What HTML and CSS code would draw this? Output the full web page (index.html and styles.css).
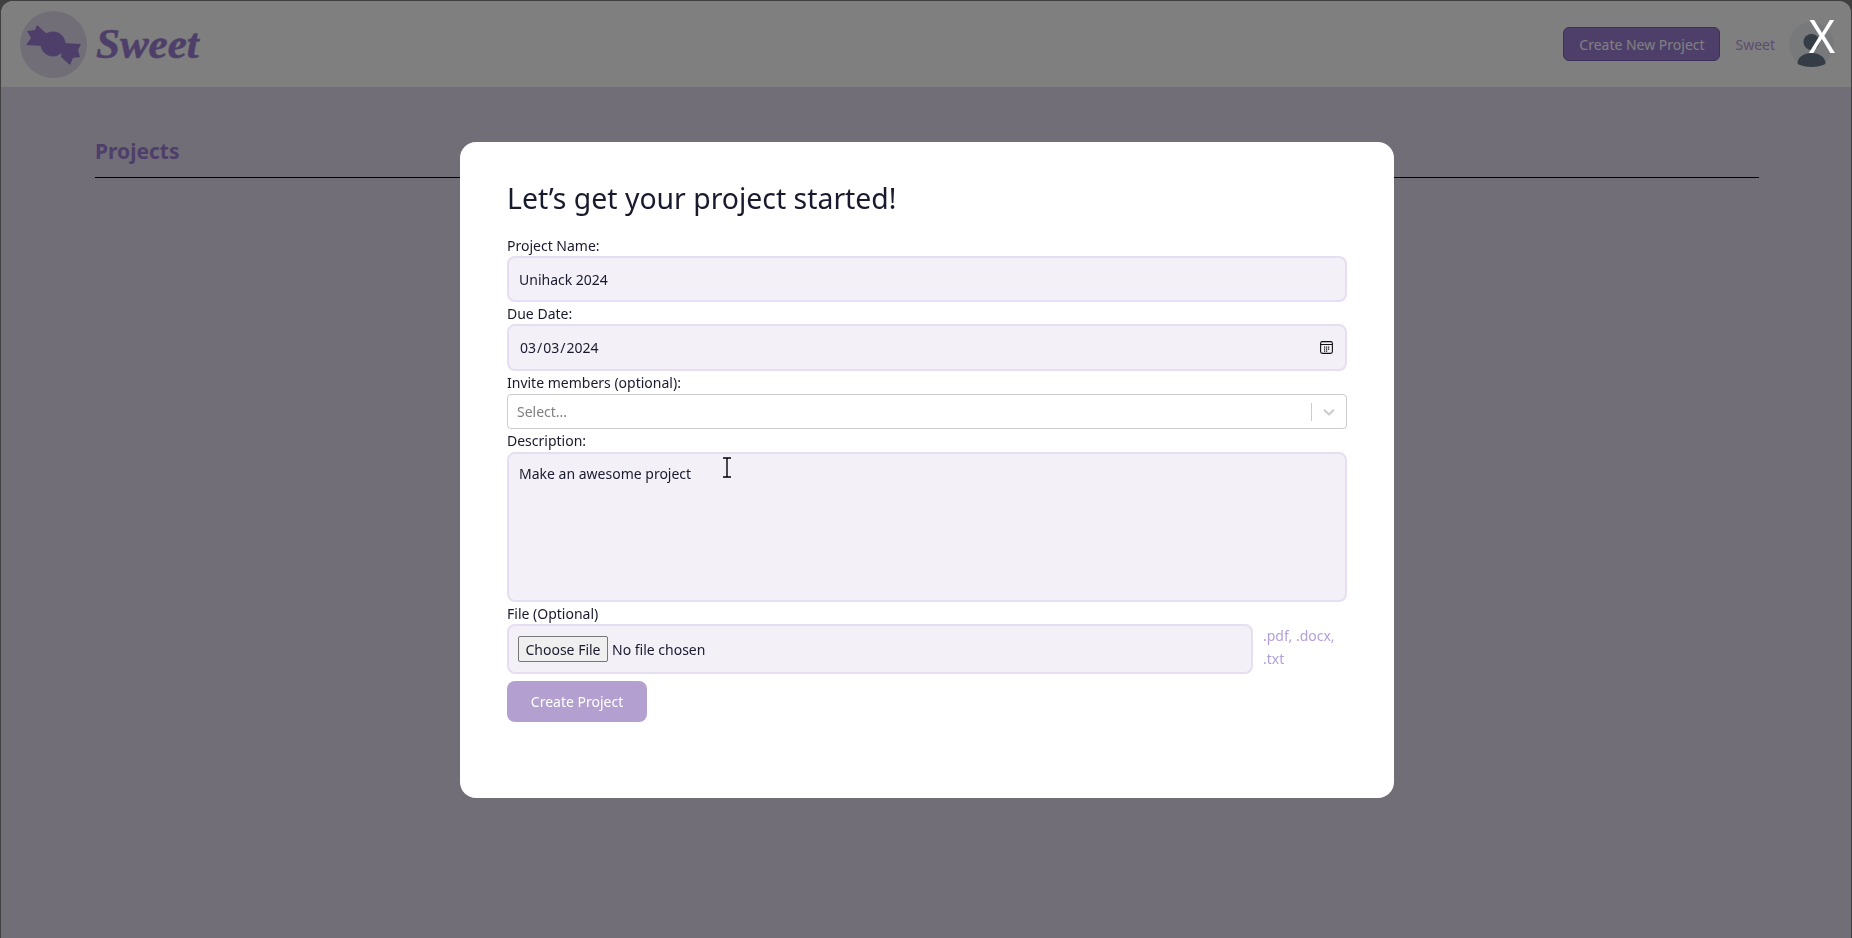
FILE: index.html
```html
<!DOCTYPE html>
<html lang="en">
<head>
    <meta charset="UTF-8">
    <meta name="viewport" content="width=device-width, initial-scale=1.0">
    <title>Sweet - Projects</title>
    <link rel="stylesheet" href="styles.css">
</head>
<body>
    <div class="app">
        <header class="topbar">
            <div class="brand">
                <div class="logo">
                    <svg viewBox="0 0 67 67" width="67" height="67">
                        <circle cx="33" cy="33" r="12.500" fill="#9d7fd4"/>
                        <path fill="#9d7fd4" d="M17 14l10 9-5 12-16-1 5-7-4-7 8-1z"/>
                        <path fill="#9d7fd4" d="M43 32l18 1-3 6 2 7-7 1-3 7-9-8z"/>
                    </svg>
                </div>
                <span class="brand-name">Sweet</span>
            </div>
            <div class="topbar-right">
                <button class="new-project">Create New Project</button>
                <span class="username">Sweet</span>
                <div class="avatar">
                    <svg viewBox="0 0 45 45" width="45" height="45">
                        <circle cx="22.500" cy="22.500" r="22.500" fill="#eef2f6"/>
                        <circle cx="22.500" cy="20" r="8" fill="#68788a"/>
                        <path fill="#68788a" d="M8.500 42c0-7 6-11 14-11s14 4 14 11c-8 4-20 4-28 0z"/>
                    </svg>
                </div>
            </div>
        </header>
        <main class="content">
            <h2 class="section-title">Projects</h2>
        </main>
    </div>

    <div class="overlay">
        <span class="close">X</span>
        <form class="modal">
            <h1>Let’s get your project started!</h1>

            <label for="name">Project Name:</label>
            <input class="field" id="name" type="text" value="Unihack 2024">

            <label for="due">Due Date:</label>
            <div class="date-wrap">
                <input class="field field-date" id="due" type="date" value="2024-03-03">
                <svg class="date-icon" viewBox="0 0 13 13" width="13" height="13">
                    <rect x="0.600" y="0.600" width="11.800" height="11.800" rx="1.800" fill="none" stroke="#111" stroke-width="1.100"/>
                    <path stroke="#111" stroke-width="1" d="M1 3.500h11"/>
                    <path fill="#111" d="M4 5.500h1.200v1.200H4zM6 5.500h1.200v1.200H6zM8 5.500h1.200v1.200H8zM4 7.500h1.200v1.200H4zM6 7.500h1.200v1.200H6zM8 7.500h1.200v1.200H8zM4 9.500h1.200v1.200H4zM6 9.500h1.200v1.200H6z"/>
                </svg>
            </div>

            <label class="label-wide">Invite members (optional):</label>
            <div class="select">
                <span class="placeholder">Select...</span>
                <span class="select-sep"></span>
                <svg class="select-arrow" viewBox="0 0 20 20" width="18" height="18">
                    <path fill="#cccccc" d="M4.500 7.400c.5-.5 1.200-.5 1.700 0L10 11.200l3.800-3.800c.5-.5 1.200-.5 1.700 0 .5.500.5 1.200 0 1.700l-4.700 4.600c-.4.400-1.200.4-1.600 0L4.500 9.100c-.5-.5-.5-1.200 0-1.700z"/>
                </svg>
            </div>

            <label class="label-wide" for="desc">Description:</label>
            <textarea class="field field-text" id="desc">Make an awesome project</textarea>

            <label for="file">File (Optional)</label>
            <div class="file-row">
                <input class="field field-file" id="file" type="file">
                <span class="file-hint">.pdf, .docx, .txt</span>
            </div>

            <button class="submit" type="button">Create Project</button>

            <svg class="ibeam" viewBox="0 0 10 21" width="10" height="21">
                <path fill="none" stroke="#000" stroke-width="1.400" d="M1 1h8M1 20h8M5 1v19"/>
            </svg>
        </form>
    </div>
</body>
</html>
```

FILE: styles.css
```css
* {
    box-sizing: border-box;
}

body {
    margin: 0;
    height: 938px;
    overflow: hidden;
    background-color: #808080;
    font-family: "Noto Sans", "Open Sans", sans-serif;
    font-size: 14px;
    color: #1a1a2e;
}

.app {
    margin: 1px 1px 0;
    height: 937px;
    background-color: #e2dcf0;
    border-radius: 12px 12px 0 0;
    overflow: hidden;
}

.topbar {
    display: flex;
    justify-content: space-between;
    align-items: center;
    height: 86px;
    padding: 0 17px 0 19px;
    background-color: #ffffff;
}

.brand {
    display: flex;
    align-items: center;
    gap: 9px;
}

.logo {
    width: 67px;
    height: 67px;
    border-radius: 50%;
    background-color: #e2dcf0;
}

.logo svg {
    display: block;
}

.brand-name {
    margin-top: -2px;
    font-family: "Liberation Serif", serif;
    font-size: 43px;
    font-weight: bold;
    font-style: italic;
    color: #9d7fd4;
    -webkit-text-stroke: 0.6px #9d7fd4;
}

.topbar-right {
    display: flex;
    align-items: center;
}

.new-project {
    width: 157px;
    height: 34px;
    margin-right: 15px;
    border: 1px solid #7d5fb5;
    border-radius: 6px;
    background-color: #9d7fd4;
    color: #ffffff;
    font-family: inherit;
    font-size: 14px;
}

.username {
    margin-right: 14px;
    color: #b79be0;
    font-size: 14px;
}

.avatar {
    width: 45px;
    height: 45px;
}

.avatar svg {
    display: block;
}

.content {
    padding: 0 92px 0 94px;
}

.section-title {
    margin: 49px 0 0;
    padding-bottom: 11px;
    border-bottom: 1px solid #000000;
    font-size: 21px;
    line-height: 30px;
    color: #9d7fd4;
}

.overlay {
    position: fixed;
    top: 0;
    left: 0;
    width: 100%;
    height: 100%;
    padding: 2px 0 0 2px;
    display: flex;
    align-items: center;
    justify-content: center;
    background-color: rgba(0, 0, 0, 0.5);
}

.close {
    position: absolute;
    top: 6px;
    right: 17px;
    font-size: 45px;
    line-height: 60px;
    color: #ffffff;
}

.modal {
    position: relative;
    width: 934px;
    padding: 38px 47px 76px;
    background-color: #ffffff;
    border-radius: 16px;
}

.modal h1 {
    margin: 0 0 18px;
    font-size: 28.4px;
    font-weight: 400;
    line-height: 36px;
}

.modal label {
    display: block;
    padding-top: 1px;
    line-height: 21px;
}

.modal .label-wide {
    line-height: 22px;
}

.field {
    display: block;
    width: 100%;
    height: 46px;
    padding: 0 10px;
    border: 2px solid #e6dff1;
    border-radius: 8px;
    background-color: #f3f0f8;
    color: #1a1a2e;
    font-family: inherit;
    font-size: 14px;
    outline: none;
}

.date-wrap {
    position: relative;
}

.field-date {
    height: 47px;
}

.field-date::-webkit-calendar-picker-indicator {
    opacity: 0;
}

.date-icon {
    position: absolute;
    top: 17px;
    right: 14px;
}

.field-text {
    height: 150px;
    padding-top: 10px;
    resize: none;
}

.select {
    display: flex;
    align-items: center;
    height: 35px;
    padding: 0 8px 0 9px;
    border: 1px solid #cccccc;
    border-radius: 4px;
}

.placeholder {
    flex: 1;
    color: #808080;
}

.select-sep {
    width: 1px;
    height: 18px;
    margin-right: 8px;
    background-color: #cccccc;
}

.file-row {
    display: grid;
    grid-template-columns: 1fr 84px;
    gap: 10px;
}

.field-file {
    height: 50px;
    padding: 10px 9px;
}

.field-file::file-selector-button {
    width: 90px;
    height: 26px;
    margin-right: 4px;
    padding: 0;
    border: 1px solid #767676;
    border-radius: 2px;
    background-color: #efefef;
    color: #1a1a2e;
    font-family: inherit;
    font-size: 14px;
}

.file-hint {
    line-height: 23px;
    color: #b39fd6;
}

.submit {
    display: block;
    width: 140px;
    height: 41px;
    margin-top: 7px;
    border: none;
    border-radius: 8px;
    background-color: #b39fd0;
    color: #ffffff;
    font-family: inherit;
    font-size: 14px;
}

.ibeam {
    position: absolute;
    top: 315px;
    left: 262px;
}
```
